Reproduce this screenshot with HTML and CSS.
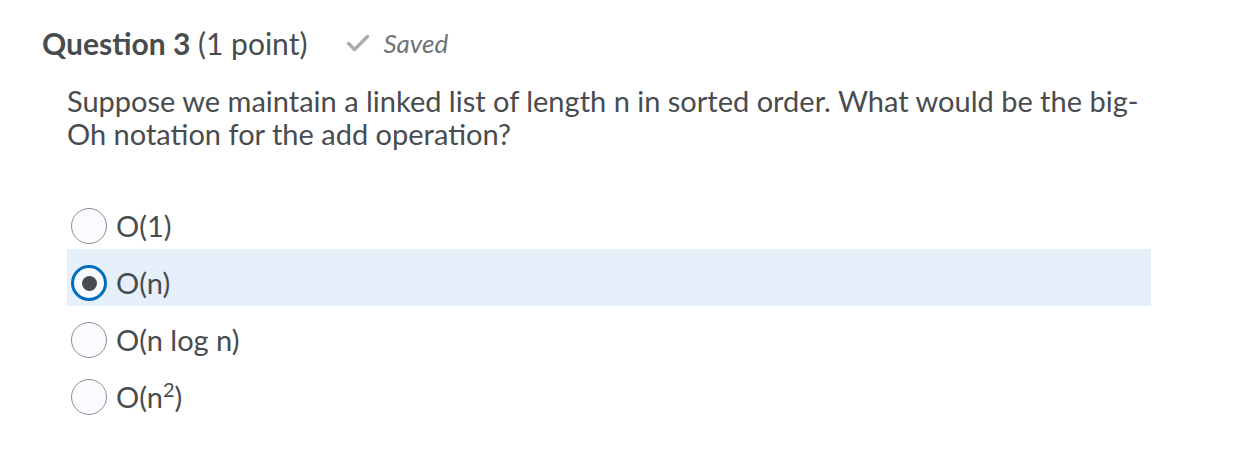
FILE: index.html
```html
<!DOCTYPE html>
<html>
<head>
<meta charset="utf-8">
<link rel="stylesheet" href="styles.css">
</head>
<body>
<div class="page">
  <div class="q-head">
    <h2 class="q-title"><strong>Question 3</strong> (1 point)</h2>
    <span class="saved">
      <svg class="check" width="26" height="22" viewBox="0 0 26 22"><path d="M3.5 11.5 L9.5 17.5 L22.5 4.5" fill="none" stroke="#a7acb0" stroke-width="3.4" stroke-linecap="round" stroke-linejoin="round"/></svg>
      <span class="saved-text">Saved</span>
    </span>
  </div>
  <div class="q-body">
    <p class="q-text">Suppose we maintain a linked list of length n in sorted order. What would be the big-Oh notation for the add operation?</p>
    <div class="options">
      <label class="opt"><span class="radio"></span><span class="opt-text">O(1)</span></label>
      <label class="opt selected"><span class="radio"></span><span class="opt-text">O(n)</span></label>
      <label class="opt"><span class="radio"></span><span class="opt-text">O(n log n)</span></label>
      <label class="opt"><span class="radio"></span><span class="opt-text">O(n<sup>2</sup>)</span></label>
    </div>
  </div>
</div>
</body>
</html>
```
FILE: styles.css
```css
html, body {
  margin: 0;
  padding: 0;
  background: #ffffff;
}
body {
  font-family: Lato, "Open Sans", sans-serif;
  color: #494c4e;
}
.page {
  padding: 24px 0 0 42px;
}
.q-head {
  display: flex;
  align-items: center;
  height: 38px;
}
.q-title {
  margin: 0;
  font-size: 30px;
  font-weight: 400;
  line-height: 38px;
}
.q-title strong {
  font-weight: 700;
}
.saved {
  display: flex;
  align-items: center;
  margin-left: 38px;
}
.check {
  display: block;
}
.saved-text {
  margin-left: 12px;
  font-style: italic;
  font-size: 26px;
  color: #6e7376;
}
.q-body {
  margin-left: 25px;
  width: 1084px;
}
.q-text {
  margin: 22px 0 0 0;
  font-size: 29px;
  line-height: 33px;
}
.options {
  margin-top: 42px;
  display: flex;
  flex-direction: column;
}
.opt {
  display: flex;
  align-items: center;
  height: 57px;
  box-sizing: border-box;
  padding: 16px 0 5px 4px;
  font-size: 29px;
}
.opt.selected {
  background: #e6f0fa;
}
.radio {
  width: 36px;
  height: 36px;
  box-sizing: border-box;
  border-radius: 50%;
  border: 1px solid #8a8f93;
  background: #f9fbff;
  flex: none;
  position: relative;
}
.opt.selected .radio {
  border: 3px solid #006fbf;
  background: #f9fbff;
}
.opt.selected .radio::after {
  content: "";
  position: absolute;
  left: 50%;
  top: 50%;
  width: 15px;
  height: 15px;
  margin: -7.5px 0 0 -7.5px;
  border-radius: 50%;
  background: #494c4e;
}
.opt-text {
  margin-left: 9px;
  line-height: 36px;
}
.opt-text sup {
  font-size: 20px;
  line-height: 0;
  vertical-align: 11px;
}
```
